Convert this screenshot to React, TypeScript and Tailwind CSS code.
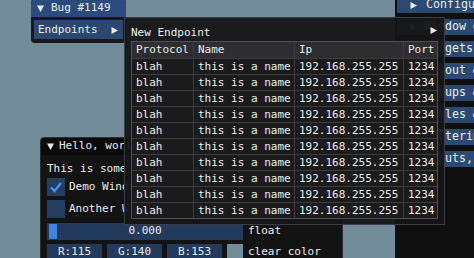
const mono = "font-['DejaVu_Sans_Mono',monospace]";

function TriRight({ className = "" }: { className?: string }) {
  return (
    <svg width="7" height="7" viewBox="0 0 7 7" className={`shrink-0 ${className}`}>
      <path d="M0.5 0L7 3.5L0.5 7Z" fill="currentColor" />
    </svg>
  );
}

function TriDown({ className = "" }: { className?: string }) {
  return (
    <svg width="7" height="7" viewBox="0 0 7 7" className={`shrink-0 ${className}`}>
      <path d="M0 0.5L7 0.5L3.5 7Z" fill="currentColor" />
    </svg>
  );
}

const demoHeaders = [
  "Configuration",
  "Window options",
  "Widgets",
  "Layout & Scrolling",
  "Popups & Modal windows",
  "Tables & Columns",
  "Filtering",
  "Inputs, Navigation & Focus",
];

// Demo window on the right, mostly hidden behind the popup
function DemoWindow() {
  return (
    <div className="absolute left-[395px] top-0 bottom-0 w-[120px] bg-[#0f0f0f] pl-[2px] flex flex-col gap-[6px] text-[11.6px]">
      {demoHeaders.map((h, i) => (
        <div
          key={h}
          className={`flex items-center h-[16px] shrink-0 bg-[#2b4a73] ${i === 0 ? "-mt-[3px]" : ""}`}
        >
          <TriRight className="ml-[13px]" />
          <span className={`whitespace-nowrap ${i === 0 ? "ml-[9px]" : "ml-[7px]"}`}>{h}</span>
        </div>
      ))}
    </div>
  );
}

function HelloWindow() {
  return (
    <div className="absolute left-[40px] top-[137px] w-[303px] h-[140px] bg-[#131313] border border-[#2c2c33] rounded-t-[4px] flex flex-col">
      <div className="h-[17px] shrink-0 bg-[#0a0a0a] rounded-t-[4px] flex items-center">
        <TriDown className="ml-[6px]" />
        <span className="ml-[5px] whitespace-nowrap">Hello, world!</span>
      </div>
      <div className="flex flex-col pl-[6px] pt-[7px]">
        <div className="h-[13px] leading-[13px] whitespace-nowrap">This is some useful text.</div>

        <div className="mt-[3px] h-[18px] flex items-center">
          <div className="w-[18px] h-[18px] bg-[#243e62] flex items-center justify-center">
            <svg width="14" height="14" viewBox="0 0 14 14">
              <path d="M2 7.5L5.5 11L12 3" fill="none" stroke="#4296fa" strokeWidth="2.2" />
            </svg>
          </div>
          <span className="ml-[4px] whitespace-nowrap">Demo Window</span>
        </div>

        <div className="mt-[4px] h-[18px] flex items-center">
          <div className="w-[18px] h-[18px] bg-[#243e62]" />
          <span className="ml-[4px] whitespace-nowrap">Another Window</span>
        </div>

        <div className="mt-[5px] h-[17px] flex items-center">
          <div className="relative w-[196px] h-[17px] bg-[#223a5c] flex items-center justify-center">
            <div className="absolute left-[2px] top-[1px] w-[8px] h-[15px] bg-[#3d85e0]" />
            <span className="relative">0.000</span>
          </div>
          <span className="ml-[5px]">float</span>
        </div>

        <div className="mt-[4px] h-[17px] flex items-center gap-[5px]">
          {["R:115", "G:140", "B:153"].map((t) => (
            <div key={t} className="w-[55px] h-[17px] bg-[#223a5c] flex items-center justify-center">
              {t}
            </div>
          ))}
          <div className="w-[16px] h-[17px] bg-[#738c99]" />
          <span className="whitespace-nowrap">clear color</span>
        </div>
      </div>
    </div>
  );
}

function BugWindow() {
  return (
    <div className="absolute left-[31px] -top-[1px] w-[95px] h-[44px] bg-[#19191c] rounded-[4px] overflow-hidden flex flex-col">
      <div className="h-[18px] shrink-0 bg-[#2a4b7b] flex items-center pt-[1px]">
        <TriDown className="ml-[6px]" />
        <span className="ml-[7px] whitespace-nowrap">Bug #1149</span>
      </div>
      <div className="mt-[3px] mx-[3px] h-[19px] bg-[#2a4870] flex items-center justify-between pl-[4px] pr-[5px] pt-[2px]">
        <span>Endpoints</span>
        <TriRight />
      </div>
    </div>
  );
}

const columns = ["Protocol", "Name", "Ip", "Port"];
const rows = Array.from({ length: 10 }, () => ["blah", "this is a name", "192.168.255.255", "1234"]);

function EndpointPopup() {
  return (
    <div className="absolute left-[124px] top-[17px] w-[321px] h-[208px] bg-[#151515]/95 border border-[#3c3c44] pl-[6px] pt-[6px]">
      <div className="w-[307px] h-[16px] flex items-start justify-between pr-[1px]">
        <span className="leading-[16px] pt-[1px]">New Endpoint</span>
        <TriRight className="mt-[3px]" />
      </div>
      <div className="mt-[1px] w-[307px] border border-[#4f4f59]">
        <div className="grid grid-cols-[62px_101px_109px_33px] h-[16px] bg-[#2e2e31]">
          {columns.map((c, i) => (
            <div key={c} className={`pl-[4px] leading-[16px] ${i < 3 ? "border-r border-[#3b3b40]" : ""}`}>
              {c}
            </div>
          ))}
        </div>
        {rows.map((r, ri) => (
          <div
            key={ri}
            className="grid grid-cols-[62px_101px_109px_33px] h-[16px] border-t border-[#3b3b40] bg-[#1b1b1b]"
          >
            {r.map((cell, i) => (
              <div
                key={i}
                className={`pl-[4px] leading-[15px] whitespace-nowrap ${i < 3 ? "border-r border-[#3b3b40]" : ""}`}
              >
                {cell}
              </div>
            ))}
          </div>
        ))}
      </div>
    </div>
  );
}

export default function App() {
  return (
    <div className={`relative w-[474px] h-[258px] overflow-hidden bg-[#738c99] text-[11px] text-[#ececec] ${mono}`}>
      <DemoWindow />
      <HelloWindow />
      <BugWindow />
      <EndpointPopup />
    </div>
  );
}
